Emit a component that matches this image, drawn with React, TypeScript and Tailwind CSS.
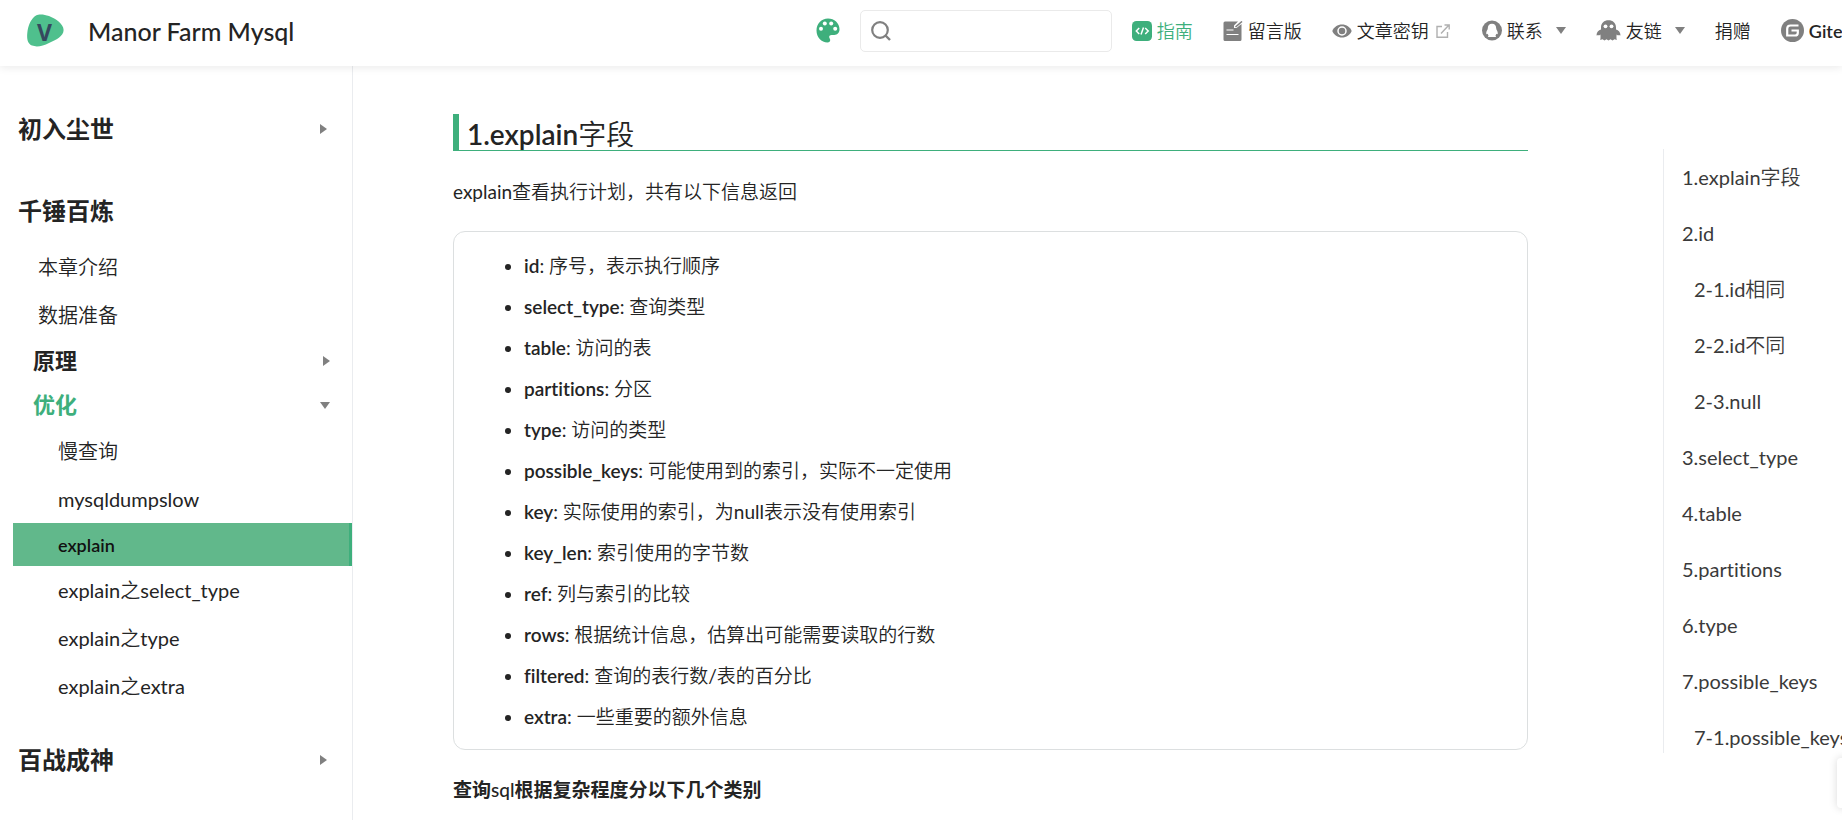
import React, { useState } from "react";

type Row = { name: string; text: string };

const rows: Row[] = [
  { name: "id", text: "序号，表示执行顺序" },
  { name: "select_type", text: "查询类型" },
  { name: "table", text: "访问的表" },
  { name: "partitions", text: "分区" },
  { name: "type", text: "访问的类型" },
  { name: "possible_keys", text: "可能使用到的索引，实际不一定使用" },
  { name: "key", text: "实际使用的索引，为null表示没有使用索引" },
  { name: "key_len", text: "索引使用的字节数" },
  { name: "ref", text: "列与索引的比较" },
  { name: "rows", text: "根据统计信息，估算出可能需要读取的行数" },
  { name: "filtered", text: "查询的表行数/表的百分比" },
  { name: "extra", text: "一些重要的额外信息" },
];

const toc = [
  { title: "1.explain字段", level: 1 },
  { title: "2.id", level: 1 },
  { title: "2-1.id相同", level: 2 },
  { title: "2-2.id不同", level: 2 },
  { title: "2-3.null", level: 2 },
  { title: "3.select_type", level: 1 },
  { title: "4.table", level: 1 },
  { title: "5.partitions", level: 1 },
  { title: "6.type", level: 1 },
  { title: "7.possible_keys", level: 1 },
  { title: "7-1.possible_keys", level: 2 },
];

const tuning = [
  "慢查询",
  "mysqldumpslow",
  "explain",
  "explain之select_type",
  "explain之type",
  "explain之extra",
];

const CaretRight = () => (
  <svg width="7" height="10" viewBox="0 0 7 10" fill="#808080">
    <path d="M0 0L7 5L0 10Z" />
  </svg>
);

const CaretDown = () => (
  <svg width="10" height="7" viewBox="0 0 10 7" fill="#808080">
    <path d="M0 0H10L5 7Z" />
  </svg>
);

const Logo = () => (
  <svg width="37" height="33" viewBox="0 0 37 33" className="shrink-0">
    <path
      d="M9 1.5C12 -0.2 17 0.2 22 2C29 4.7 36.6 10 36.6 16C36.6 22 29 26 22 29C16 32 10 33.4 5 31.6C0.6 30 -0.3 25 0.3 19C1 11.5 4 4.5 9 1.5Z"
      fill="#4fc08d"
    />
    <text
      x="17.5"
      y="26.5"
      textAnchor="middle"
      fontSize="23"
      fontWeight="700"
      fill="#35495e"
      fontFamily="Open Sans, sans-serif"
    >
      V
    </text>
  </svg>
);

const PaletteIcon = () => (
  <svg width="24" height="25" viewBox="0 0 24 25">
    <path
      d="M12 0.5C5.4 0.5 0.5 5.9 0.5 12.5C0.5 19.2 5.4 24.5 11.5 24.5C13.3 24.5 14.2 23.4 14.2 22C14.2 20.6 13.2 20.1 13.2 18.9C13.2 17.7 14.2 17 15.5 17H18.2C21.6 17 23.5 14.4 23.5 11.3C23.5 5.2 18.3 0.5 12 0.5Z"
      fill="#3eaf7c"
    />
    <circle cx="5" cy="10.8" r="2" fill="#fff" />
    <circle cx="8.8" cy="5.5" r="2" fill="#fff" />
    <circle cx="15.2" cy="5.5" r="2" fill="#fff" />
    <circle cx="19.2" cy="10.8" r="2" fill="#fff" />
  </svg>
);

const SearchIcon = () => (
  <svg width="20" height="20" viewBox="0 0 20 20" fill="none" stroke="#808080">
    <circle cx="9" cy="9" r="7.8" strokeWidth="2.2" />
    <path d="M14.5 14.5L19 19" strokeWidth="2.4" />
  </svg>
);

const CodeIcon = () => (
  <svg width="20" height="20" viewBox="0 0 20 20">
    <rect width="20" height="20" rx="4.5" fill="#3eaf7c" />
    <path
      d="M7.2 7L4.3 10L7.2 13M13.2 7L16.2 10L13.2 13M11.5 6.5L9 13.5"
      stroke="#fff"
      strokeWidth="1.5"
      fill="none"
    />
  </svg>
);

const NoteIcon = () => (
  <svg width="20" height="20" viewBox="0 0 20 20">
    <path
      d="M2 0.5H15L11 4.5V7H13.5L18.5 3V18.5Q18.5 20 17 20H2Q0.5 20 0.5 18.5V2Q0.5 0.5 2 0.5Z"
      fill="#808080"
    />
    <path d="M3.5 9H10.5M3.5 13.5H15.5" stroke="#fff" strokeWidth="1.2" />
    <path d="M12.5 6L19 0.5" stroke="#808080" strokeWidth="1.6" />
  </svg>
);

const EyeIcon = () => (
  <svg width="20" height="14" viewBox="0 0 20 14">
    <path
      d="M10 0.5C5.5 0.5 2 3 0.3 7C2 11 5.5 13.5 10 13.5C14.5 13.5 18 11 19.7 7C18 3 14.5 0.5 10 0.5Z"
      fill="#808080"
    />
    <circle cx="10" cy="7" r="4" fill="#808080" stroke="#fff" strokeWidth="1.5" />
  </svg>
);

const ExternalIcon = () => (
  <svg width="14" height="14" viewBox="0 0 14 14" fill="none" stroke="#b0b0b0">
    <path d="M6 2.5H1V13.2H11.5V8" strokeWidth="1.4" />
    <path d="M5 9.5L12.5 1.5M8.5 1H13.2V5.5" strokeWidth="1.4" />
  </svg>
);

const QqIcon = () => (
  <svg width="20" height="21" viewBox="0 0 20 21">
    <circle cx="10" cy="10.5" r="10" fill="#808080" />
    <path
      d="M10 3.8C7.2 3.8 5.8 5.8 5.8 8.2C5.8 9.8 4.2 11.2 4.2 13.2C4.2 14.3 5 14.4 5.6 13.8C5.8 14.6 6.2 15 6.6 15.4C5.6 15.9 5.8 17 7.3 17H12.7C14.2 17 14.4 15.9 13.4 15.4C13.8 15 14.2 14.6 14.4 13.8C15 14.4 15.8 14.3 15.8 13.2C15.8 11.2 14.2 9.8 14.2 8.2C14.2 5.8 12.8 3.8 10 3.8Z"
      fill="#fff"
    />
  </svg>
);

const GhostIcon = () => (
  <svg width="25" height="21" viewBox="0 0 25 21">
    <path
      d="M12.5 0.3C8.2 0.3 5 3 5 7.5V9.5C2.5 10 0.5 12 0.5 15.5C2 14.8 3 16 4.4 14.5C4.6 17 4.6 18.5 4.2 20L6.5 19.2L8.5 20.5L10.5 19.2L12.5 20.5L14.5 19.2L16.500 20.5L18.5 19.2L20.8 20C20.4 18.5 20.4 17 20.6 14.5C22 16 23 14.8 24.5 15.5C24.5 12 22.5 10 20 9.5V7.5C20 3 16.8 0.3 12.5 0.3Z"
      fill="#808080"
    />
    <circle cx="9.5" cy="6.3" r="1.9" fill="#fff" />
    <circle cx="15.5" cy="6.3" r="1.9" fill="#fff" />
  </svg>
);

const GiteeIcon = () => (
  <svg width="23" height="23" viewBox="0 0 23 23">
    <circle cx="11.5" cy="11.5" r="11.5" fill="#808080" />
    <path
      d="M17.5 6.5H9.5Q6.2 6.5 6.2 9.8V16.5H14Q16.8 16.5 16.8 13.7V11.5H10.5"
      fill="none"
      stroke="#fff"
      strokeWidth="2.2"
    />
  </svg>
);

const App = () => {
  const [keyword, setKeyword] = useState("");
  const [active, setActive] = useState("explain");

  return (
    <div className="flex min-h-screen flex-col overflow-hidden bg-white font-[Lato,'Noto_Sans_CJK_SC_DemiLight','Noto_Sans_CJK_SC',sans-serif] text-[#242424] [font-variant-ligatures:none]">
      <header className="relative z-10 flex h-[66px] shrink-0 items-center overflow-hidden bg-white pb-[5px] pl-[27px] shadow-[0_2px_8px_rgba(0,0,0,0.08)]">
        <a href="#home" className="flex items-center gap-6 text-[25px] font-medium">
          <Logo />
          <span className="whitespace-nowrap pt-0.5">Manor Farm Mysql</span>
        </a>

        <nav className="-mr-[29px] ml-auto flex shrink-0 items-center whitespace-nowrap text-lg">
          <button type="button" aria-label="主题" className="mr-5">
            <PaletteIcon />
          </button>
          <label className="mr-5 flex h-[42px] w-[252px] items-center gap-2 rounded-[5px] border border-[#eaeaea] px-2.5">
            <SearchIcon />
            <input
              type="text"
              aria-label="搜索"
              value={keyword}
              onChange={(e) => setKeyword(e.target.value)}
              className="min-w-0 flex-1 text-base outline-none"
            />
          </label>
          <a href="#guide" className="mr-[30px] flex items-center gap-[5px] text-[#3eaf7c]">
            <CodeIcon />
            指南
          </a>
          <a href="#message" className="mr-[30px] flex items-center gap-[5px]">
            <NoteIcon />
            留言版
          </a>
          <a href="#secret" className="mr-8 flex items-center gap-[5px]">
            <EyeIcon />
            文章密钥
            <span className="ml-0.5">
              <ExternalIcon />
            </span>
          </a>
          <button type="button" className="mr-[30px] flex items-center gap-[5px]">
            <QqIcon />
            联系
            <span className="ml-2">
              <CaretDown />
            </span>
          </button>
          <button type="button" className="mr-[30px] flex items-center gap-[5px]">
            <GhostIcon />
            友链
            <span className="ml-2">
              <CaretDown />
            </span>
          </button>
          <a href="#donate" className="mr-[30px]">
            捐赠
          </a>
          <a href="#gitee" className="flex items-center gap-[5px] font-semibold">
            <GiteeIcon />
            Gitee
            <ExternalIcon />
          </a>
        </nav>
      </header>

      <div className="flex flex-1">
        <aside className="flex w-[353px] shrink-0 flex-col gap-[34px] border-r border-[#eaecef] pt-[39px]">
          <button
            type="button"
            className="flex h-12 items-center justify-between pl-[18px] pr-[25px] font-[Lato,'Noto_Sans_CJK_SC',sans-serif] text-2xl font-bold"
          >
            初入尘世
            <CaretRight />
          </button>

          <section>
            <h2 className="flex h-12 items-center pl-[18px] font-[Lato,'Noto_Sans_CJK_SC',sans-serif] text-2xl font-bold">
              千锤百炼
            </h2>
            <ul className="-mb-2 mt-2 text-xl">
              <li>
                <a href="#intro" className="flex h-12 items-center pl-[38px]">
                  本章介绍
                </a>
              </li>
              <li>
                <a href="#data" className="flex h-12 items-center pl-[38px]">
                  数据准备
                </a>
              </li>
              <li>
                <button
                  type="button"
                  className="flex h-11 w-full items-center justify-between pl-[33px] pr-[22px] font-[Lato,'Noto_Sans_CJK_SC',sans-serif] text-[22px] font-bold"
                >
                  原理
                  <CaretRight />
                </button>
              </li>
              <li>
                <button
                  type="button"
                  className="flex h-11 w-full items-center justify-between pl-[33px] pr-[22px] font-[Lato,'Noto_Sans_CJK_SC',sans-serif] text-[22px] font-bold text-[#3eaf7c]"
                >
                  优化
                  <CaretDown />
                </button>
                <ul className="pl-[13px]">
                  {tuning.map((item) => (
                    <li key={item}>
                      <a
                        href={`#${item}`}
                        onClick={() => setActive(item)}
                        className={
                          item === active
                            ? "flex h-[43px] items-center border-r-[3px] border-[#3eaf7c] bg-[#61b88b] pl-[45px] text-lg font-semibold text-[#111]"
                            : "flex h-12 items-center pl-[45px]"
                        }
                      >
                        {item}
                      </a>
                    </li>
                  ))}
                </ul>
              </li>
            </ul>
          </section>

          <button
            type="button"
            className="flex h-12 items-center justify-between pl-[18px] pr-[25px] font-[Lato,'Noto_Sans_CJK_SC',sans-serif] text-2xl font-bold"
          >
            百战成神
            <CaretRight />
          </button>
        </aside>

        <main className="ml-[100px] mr-[135px] min-w-0 flex-1 pt-12 text-[19px] leading-7">
          <h1 className="border-b border-l-6 border-[#3eaf7c] pl-2 pt-1 text-[28px] font-semibold leading-8">
            1.explain<span className="font-normal">字段</span>
          </h1>
          <p className="mt-[27px]">explain查看执行计划，共有以下信息返回</p>
          <ul className="mt-[25px] list-disc rounded-xl border border-[#dcdfe0] pb-3 pl-[70px] pt-[13px]">
            {rows.map((row) => (
              <li key={row.name} className="leading-[41px]">
                <strong className="font-semibold">{row.name}</strong>: {row.text}
              </li>
            ))}
          </ul>
          <p className="mt-[26px] font-[Lato,'Noto_Sans_CJK_SC',sans-serif] font-bold">
            查询<span className="font-medium">sql</span>根据复杂程度分以下几个类别
          </p>
        </main>

        <nav className="mt-[83px] h-[604px] w-[179px] shrink-0 overflow-hidden border-l border-[#eaecef] text-xl text-[#3a3a3a]">
          <ul>
            {toc.map((item) => (
              <li key={item.title}>
                <a
                  href={`#${item.title}`}
                  className={
                    item.level === 1
                      ? "block whitespace-nowrap pl-[18px] leading-[56px]"
                      : "block whitespace-nowrap pl-[30px] leading-[56px]"
                  }
                >
                  {item.title}
                </a>
              </li>
            ))}
          </ul>
        </nav>
      </div>

      <button
        type="button"
        aria-label="展开"
        className="fixed -right-[45px] bottom-3 h-[50px] w-[50px] rounded bg-white shadow-[0_0_8px_rgba(0,0,0,0.15)]"
      />
    </div>
  );
};

export default App;
